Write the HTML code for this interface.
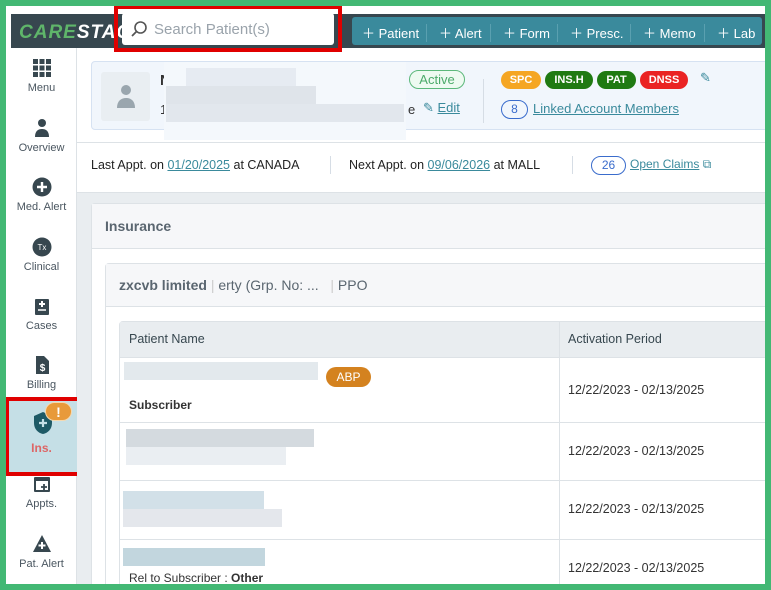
<!DOCTYPE html>
<html><head><meta charset="utf-8"><style>
*{box-sizing:border-box;margin:0;padding:0}
body{width:771px;height:590px;overflow:hidden;background:#43b874;font-family:"Liberation Sans",sans-serif;position:relative}
.abs{position:absolute}
#white{left:6px;top:6px;width:759px;height:578px;background:#fff;overflow:hidden}
#top{left:5px;top:8px;width:754px;height:34px;background:#37474f}
#side{left:0;top:42px;width:71px;height:540px;background:#fff;border-right:1px solid #dde2e6}
.nav{position:absolute;left:0;width:71px;text-align:center;font-size:11px;color:#4a5660}
.nav .ic{display:block;margin:0 auto 4px;width:20px;height:20px}
.tbtn{color:#fff;font-size:13px;position:absolute;top:17px}
.pill{position:absolute;height:18px;border-radius:9px;color:#fff;font-size:11px;line-height:18px;text-align:center;font-weight:bold}
</style></head><body>
<div id="white" class="abs">
 <div id="top" class="abs">
  <div class="abs" style="left:8px;top:8px;font-size:19px;font-weight:bold;font-style:italic;letter-spacing:1px;color:#fff"><span style="color:#5fb56a">CARE</span>STAC</div>
  <div class="abs" style="left:341px;top:3px;width:410px;height:28px;background:#3a8a9c;border-radius:3px"></div>
 </div>
 <div class="abs" style="left:108px;top:-1px;width:228px;height:47px;border:4px solid #e00000"></div>
 <div class="abs" style="left:116px;top:7px;width:212px;height:32px;background:#fff;border-radius:3px"></div>
 <svg class="abs" style="left:124px;top:14px" width="18" height="18" viewBox="0 0 18 18"><circle cx="10.5" cy="7.5" r="5.5" fill="none" stroke="#555" stroke-width="1.6"/><path d="M6.5 11.5L2 16" stroke="#555" stroke-width="1.8"/></svg>
 <div class="abs" style="left:148px;top:15px;font-size:15px;color:#9aa3ab">Search Patient(s)</div>
 <div class="tbtn" style="left:356px">＋ Patient</div>
 <div class="tbtn" style="left:433px">＋ Alert</div>
 <div class="tbtn" style="left:497px">＋ Form</div>
 <div class="tbtn" style="left:564px">＋ Presc.</div>
 <div class="tbtn" style="left:637px">＋ Memo</div>
 <div class="tbtn" style="left:711px">＋ Lab</div>
 <div class="abs" style="left:420px;top:18px;width:1px;height:18px;background:#5aa0b0"></div>
 <div class="abs" style="left:484px;top:18px;width:1px;height:18px;background:#5aa0b0"></div>
 <div class="abs" style="left:551px;top:18px;width:1px;height:18px;background:#5aa0b0"></div>
 <div class="abs" style="left:624px;top:18px;width:1px;height:18px;background:#5aa0b0"></div>
 <div class="abs" style="left:698px;top:18px;width:1px;height:18px;background:#5aa0b0"></div>

 <div id="side" class="abs">
  <div class="nav" style="top:10px"><svg class="ic" viewBox="0 0 20 20" fill="#37474f"><rect x="1" y="1" width="5" height="5"/><rect x="7.5" y="1" width="5" height="5"/><rect x="14" y="1" width="5" height="5"/><rect x="1" y="7.5" width="5" height="5"/><rect x="7.5" y="7.5" width="5" height="5"/><rect x="14" y="7.5" width="5" height="5"/><rect x="1" y="14" width="5" height="5"/><rect x="7.5" y="14" width="5" height="5"/><rect x="14" y="14" width="5" height="5"/></svg>Menu</div>
  <div class="nav" style="top:70px"><svg class="ic" viewBox="0 0 20 20" fill="#37474f"><circle cx="10" cy="5" r="4"/><path d="M3 19c0-6 3-8 7-8s7 2 7 8z"/></svg>Overview</div>
  <div class="nav" style="top:129px"><svg class="ic" viewBox="0 0 20 20"><circle cx="10" cy="10" r="9.5" fill="#37474f"/><path d="M10 5v10M5 10h10" stroke="#fff" stroke-width="2.4"/></svg>Med. Alert</div>
  <div class="nav" style="top:189px"><svg class="ic" viewBox="0 0 20 20"><circle cx="10" cy="10" r="9.5" fill="#37474f"/><text x="10" y="13" font-size="8" fill="#fff" text-anchor="middle" font-family="Liberation Sans">Tx</text></svg>Clinical</div>
  <div class="nav" style="top:248px"><svg class="ic" viewBox="0 0 20 20"><rect x="3" y="3" width="14" height="16" rx="1" fill="#37474f"/><path d="M10 5v6M7 8h6" stroke="#fff" stroke-width="2"/><path d="M6 14h8" stroke="#fff" stroke-width="1.5"/></svg>Cases</div>
  <div class="nav" style="top:307px"><svg class="ic" viewBox="0 0 20 20"><path d="M4 1h8l5 5v13H4z" fill="#37474f"/><text x="10.5" y="16" font-size="10" font-weight="bold" fill="#fff" text-anchor="middle" font-family="Liberation Sans">$</text></svg>Billing</div>
  <div class="abs" style="left:-1px;top:349px;width:77px;height:79px;border:4px solid #e00000;background:#c5dfe6"></div>
  <svg class="abs" style="left:26px;top:363px" width="22" height="24" viewBox="0 0 22 24"><path d="M11 1l9 4v7c0 6-4 10-9 11C6 22 2 18 2 12V5z" fill="#1e5a66"/><path d="M11 8v8M7 12h8" stroke="#c5dfe6" stroke-width="2.2"/></svg>
  <div class="abs" style="left:39px;top:354px;width:27px;height:19px;border-radius:10px;background:#e89a3a;color:#fff;font-weight:bold;font-size:14px;text-align:center;line-height:19px;border:1px solid #f5d9b0">!</div>
  <div class="abs" style="left:0;top:393px;width:71px;text-align:center;font-size:12px;font-weight:bold;color:#d66">Ins.</div>
  <div class="nav" style="top:426px"><svg class="ic" viewBox="0 0 20 20"><rect x="2" y="3" width="16" height="15" rx="1" fill="#37474f"/><rect x="4" y="7" width="12" height="9" fill="#fff"/><path d="M12 10v6M9 13h6" stroke="#37474f" stroke-width="1.8"/></svg>Appts.</div>
  <div class="nav" style="top:486px"><svg class="ic" viewBox="0 0 20 20"><path d="M10 1L19 18H1z" fill="#37474f"/><path d="M10 8v7M6.5 11.5h7" stroke="#fff" stroke-width="2"/></svg>Pat. Alert</div>
 </div>

 <div class="abs" style="left:85px;top:55px;width:680px;height:69px;background:#f1f6fc;border:1px solid #d6e2f2;border-radius:4px"></div>
 <div class="abs" style="left:95px;top:66px;width:49px;height:49px;background:#e9eef2;border-radius:3px"></div>
 <svg class="abs" style="left:110px;top:78px" width="20" height="24" viewBox="0 0 20 24" fill="#9aa6ae"><circle cx="10" cy="6" r="5"/><path d="M1 24c0-7 4-10 9-10s9 3 9 10z"/></svg>
 <div class="abs" style="left:154px;top:66px;font-size:15px;font-weight:bold;color:#333">N</div>
 <div class="abs" style="left:154px;top:96px;font-size:13px;color:#333">1</div>
 <div class="abs" style="left:158px;top:56px;width:242px;height:78px;background:#f4f8fc"></div>
 <div class="abs" style="left:180px;top:62px;width:110px;height:18px;background:#e6ebf2"></div>
 <div class="abs" style="left:160px;top:80px;width:150px;height:18px;background:#dfe4ea"></div>
 <div class="abs" style="left:160px;top:98px;width:238px;height:18px;background:#e2e7ed"></div>
 <div class="abs" style="left:402px;top:96px;font-size:13px;color:#333">e</div>
 <div class="abs" style="left:403px;top:64px;width:56px;height:19px;border:1px solid #5cb87a;border-radius:10px;background:#eefaf1;color:#4caa6a;font-size:13px;text-align:center;line-height:17px">Active</div>
 <div class="abs" style="left:417px;top:94px;font-size:13px;color:#3a8a9c">✎ <span style="text-decoration:underline">Edit</span></div>
 <div class="abs" style="left:477px;top:73px;width:1px;height:44px;background:#d6dde5"></div>
 <div class="pill" style="left:495px;top:65px;width:40px;background:#f5a623">SPC</div>
 <div class="pill" style="left:539px;top:65px;width:48px;background:#1f7a12">INS.H</div>
 <div class="pill" style="left:591px;top:65px;width:39px;background:#1f7a12">PAT</div>
 <div class="pill" style="left:634px;top:65px;width:48px;background:#ea2323">DNSS</div>
 <div class="abs" style="left:694px;top:64px;font-size:13px;color:#3a8a9c">✎</div>
 <div class="abs" style="left:495px;top:94px;width:27px;height:19px;border:1px solid #3a6ccc;border-radius:10px;color:#3a6ccc;font-size:12px;text-align:center;line-height:17px">8</div>
 <div class="abs" style="left:527px;top:95px;font-size:13px;color:#3a8a9c;text-decoration:underline">Linked Account Members</div>

 <div class="abs" style="left:71px;top:136px;width:700px;height:1px;background:#dde2e6"></div>
 <div class="abs" style="left:85px;top:152px;font-size:12.5px;color:#222">Last Appt. on <span style="color:#3a8a9c;text-decoration:underline">01/20/2025</span> at CANADA</div>
 <div class="abs" style="left:324px;top:150px;width:1px;height:18px;background:#d6dde5"></div>
 <div class="abs" style="left:343px;top:152px;font-size:12.5px;color:#222">Next Appt. on <span style="color:#3a8a9c;text-decoration:underline">09/06/2026</span> at MALL</div>
 <div class="abs" style="left:566px;top:150px;width:1px;height:18px;background:#d6dde5"></div>
 <div class="abs" style="left:585px;top:150px;width:35px;height:19px;border:1px solid #3a6ccc;border-radius:10px;color:#3a6ccc;font-size:12px;text-align:center;line-height:17px">26</div>
 <div class="abs" style="left:624px;top:151px;font-size:12px;color:#3a8a9c"><span style="text-decoration:underline">Open Claims</span> ⧉</div>

 <div class="abs" style="left:71px;top:186px;width:700px;height:400px;background:#e9edf0;border-top:1px solid #dde2e6"></div>
 <div class="abs" style="left:85px;top:197px;width:690px;height:400px;background:#fff;border:1px solid #dde2e6;border-radius:4px"></div>
 <div class="abs" style="left:86px;top:198px;width:690px;height:45px;background:#f6f7f9;border-bottom:1px solid #dde2e6"></div>
 <div class="abs" style="left:99px;top:212px;font-size:14px;font-weight:bold;color:#5a6670">Insurance</div>
 <div class="abs" style="left:99px;top:257px;width:680px;height:340px;background:#fff;border:1px solid #dde2e6;border-radius:4px"></div>
 <div class="abs" style="left:100px;top:258px;width:680px;height:43px;background:#f6f7f9;border-bottom:1px solid #dde2e6"></div>
 <div class="abs" style="left:113px;top:271px;font-size:14px;color:#5a6670"><b>zxcvb limited</b> <span style="color:#ccc">|</span> erty (Grp. No: ... &nbsp; <span style="color:#ccc">|</span> PPO</div>
 <div class="abs" style="left:113px;top:315px;width:680px;height:280px;border:1px solid #dde2e6;border-radius:4px"></div>
 <div class="abs" style="left:114px;top:316px;width:680px;height:36px;background:#e9edf0;border-bottom:1px solid #dde2e6"></div>
 <div class="abs" style="left:553px;top:316px;width:1px;height:270px;background:#dde2e6"></div>
 <div class="abs" style="left:123px;top:326px;font-size:12.5px;color:#37474f">Patient Name</div>
 <div class="abs" style="left:562px;top:326px;font-size:12.5px;color:#37474f">Activation Period</div>
 <div class="abs" style="left:114px;top:416px;width:680px;height:1px;background:#dde2e6"></div>
 <div class="abs" style="left:114px;top:474px;width:680px;height:1px;background:#dde2e6"></div>
 <div class="abs" style="left:114px;top:533px;width:680px;height:1px;background:#dde2e6"></div>
 <div class="abs" style="left:118px;top:356px;width:194px;height:18px;background:#e3e9ed"></div>
 <div class="pill" style="left:320px;top:361px;width:45px;height:20px;line-height:20px;border-radius:10px;background:#d4821f;font-size:12px;font-weight:normal">ABP</div>
 <div class="abs" style="left:123px;top:392px;font-size:12px;font-weight:bold;color:#333">Subscriber</div>
 <div class="abs" style="left:120px;top:423px;width:188px;height:18px;background:#d4dadf"></div>
 <div class="abs" style="left:120px;top:441px;width:160px;height:18px;background:#eaeef2"></div>
 <div class="abs" style="left:117px;top:485px;width:141px;height:18px;background:#d2e0e8"></div>
 <div class="abs" style="left:117px;top:503px;width:159px;height:18px;background:#e4e7ec"></div>
 <div class="abs" style="left:117px;top:542px;width:142px;height:18px;background:#c2d6de"></div>
 <div class="abs" style="left:123px;top:565px;font-size:12px;color:#333">Rel to Subscriber : <b>Other</b></div>
 <div class="abs" style="left:562px;top:377px;font-size:12.5px;color:#333">12/22/2023 - 02/13/2025</div>
 <div class="abs" style="left:562px;top:438px;font-size:12.5px;color:#333">12/22/2023 - 02/13/2025</div>
 <div class="abs" style="left:562px;top:496px;font-size:12.5px;color:#333">12/22/2023 - 02/13/2025</div>
 <div class="abs" style="left:562px;top:555px;font-size:12.5px;color:#333">12/22/2023 - 02/13/2025</div>
</div>
</body></html>
